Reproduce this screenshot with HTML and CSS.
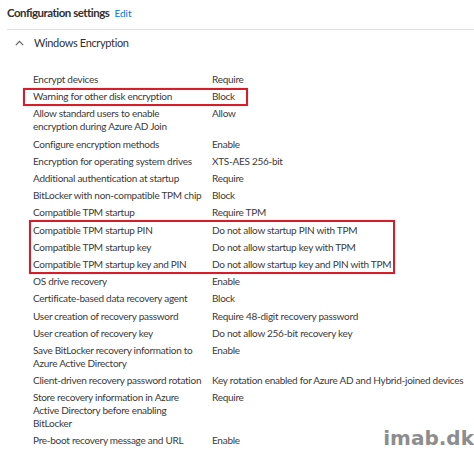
FILE: index.html
```html
<!DOCTYPE html>
<html>
<head>
<meta charset="utf-8">
<link rel="stylesheet" href="styles.css">
</head>
<body>
<div class="page">
  <div class="title-bar">
    <span class="title">Configuration settings</span>
    <span class="edit">Edit</span>
  </div>
  <div class="section-head">
    <svg class="chev" width="9" height="6" viewBox="0 0 9 6"><path d="M0.8 5.2 L4.5 1.4 L8.2 5.2" fill="none" stroke="#605e5c" stroke-width="1.1"/></svg>
    <span class="section-title">Windows Encryption</span>
  </div>
  <div class="settings">
    <div class="row"><div class="lbl">Encrypt devices</div><div class="val">Require</div></div>
    <div class="row hl-one"><div class="lbl">Warning for other disk encryption</div><div class="val">Block</div></div>
    <div class="row"><div class="lbl">Allow standard users to enable encryption during Azure AD Join</div><div class="val">Allow</div></div>
    <div class="row"><div class="lbl">Configure encryption methods</div><div class="val">Enable</div></div>
    <div class="row"><div class="lbl">Encryption for operating system drives</div><div class="val">XTS-AES 256-bit</div></div>
    <div class="row"><div class="lbl">Additional authentication at startup</div><div class="val">Require</div></div>
    <div class="row"><div class="lbl">BitLocker with non-compatible TPM chip</div><div class="val">Block</div></div>
    <div class="row"><div class="lbl">Compatible TPM startup</div><div class="val">Require TPM</div></div>
    <div class="group hl-group">
      <div class="row"><div class="lbl">Compatible TPM startup PIN</div><div class="val">Do not allow startup PIN with TPM</div></div>
      <div class="row"><div class="lbl">Compatible TPM startup key</div><div class="val">Do not allow startup key with TPM</div></div>
      <div class="row"><div class="lbl">Compatible TPM startup key and PIN</div><div class="val">Do not allow startup key and PIN with TPM</div></div>
    </div>
    <div class="row"><div class="lbl">OS drive recovery</div><div class="val">Enable</div></div>
    <div class="row"><div class="lbl">Certificate-based data recovery agent</div><div class="val">Block</div></div>
    <div class="row"><div class="lbl">User creation of recovery password</div><div class="val">Require 48-digit recovery password</div></div>
    <div class="row"><div class="lbl">User creation of recovery key</div><div class="val">Do not allow 256-bit recovery key</div></div>
    <div class="row"><div class="lbl">Save BitLocker recovery information to Azure Active Directory</div><div class="val">Enable</div></div>
    <div class="row"><div class="lbl">Client-driven recovery password rotation</div><div class="val">Key rotation enabled for Azure AD and Hybrid-joined devices</div></div>
    <div class="row"><div class="lbl">Store recovery information in Azure Active Directory before enabling BitLocker</div><div class="val">Require</div></div>
    <div class="row"><div class="lbl">Pre-boot recovery message and URL</div><div class="val">Enable</div></div>
  </div>
  <div class="watermark">imab.dk</div>
</div>
</body>
</html>
```

FILE: styles.css
```css
html, body {
  margin: 0;
  padding: 0;
  background: #ffffff;
}
body {
  font-family: Lato, "Liberation Sans", sans-serif;
  color: #323130;
  overflow: hidden;
}
.page {
  position: relative;
  width: 474px;
  height: 450px;
  overflow: hidden;
}
.title-bar {
  display: flex;
  align-items: baseline;
  gap: 5px;
  margin-left: 7px;
  padding-top: 5px;
  border-bottom: 1px solid #e1dfdd;
  box-sizing: border-box;
  height: 30px;
}
.title {
  font-size: 11.5px;
  font-weight: 700;
  letter-spacing: -0.5px;
  color: #323130;
  line-height: 16px;
}
.edit {
  font-size: 10px;
  color: #0078d4;
  line-height: 16px;
}
.section-head {
  display: flex;
  align-items: center;
  gap: 10px;
  padding-left: 15px;
  height: 25px;
}
.chev {
  display: block;
}
.section-title {
  font-size: 11px;
  letter-spacing: -0.35px;
  color: #323130;
  line-height: 16px;
}
.settings {
  margin-top: 16px;
  padding-left: 33px;
  font-size: 10px;
  letter-spacing: -0.27px;
  color: #3b3a39;
}
.row {
  display: grid;
  grid-template-columns: 172px 1fr;
  column-gap: 7px;
  padding: 2.1px 0;
  line-height: 13px;
}
.val {
  white-space: nowrap;
}
.hl-one, .hl-group {
  position: relative;
}
.hl-one::after {
  content: "";
  position: absolute;
  left: -10px;
  width: 225px;
  top: -0.5px;
  bottom: -0.5px;
  border: 2px solid #d41f2a;
  box-sizing: border-box;
  box-shadow: 0 0 1px rgba(150,0,0,0.35);
}
.hl-group::after {
  content: "";
  position: absolute;
  left: -4px;
  width: 366px;
  top: -2px;
  bottom: -1px;
  border: 2px solid #d41f2a;
  box-sizing: border-box;
  box-shadow: 0 0 1px rgba(150,0,0,0.35);
}
.watermark {
  position: absolute;
  right: 0px;
  bottom: 1px;
  font-family: "DejaVu Sans", "Liberation Sans", sans-serif;
  font-weight: bold;
  font-size: 20px;
  line-height: 22px;
  color: #8d8d8d;
}
```
